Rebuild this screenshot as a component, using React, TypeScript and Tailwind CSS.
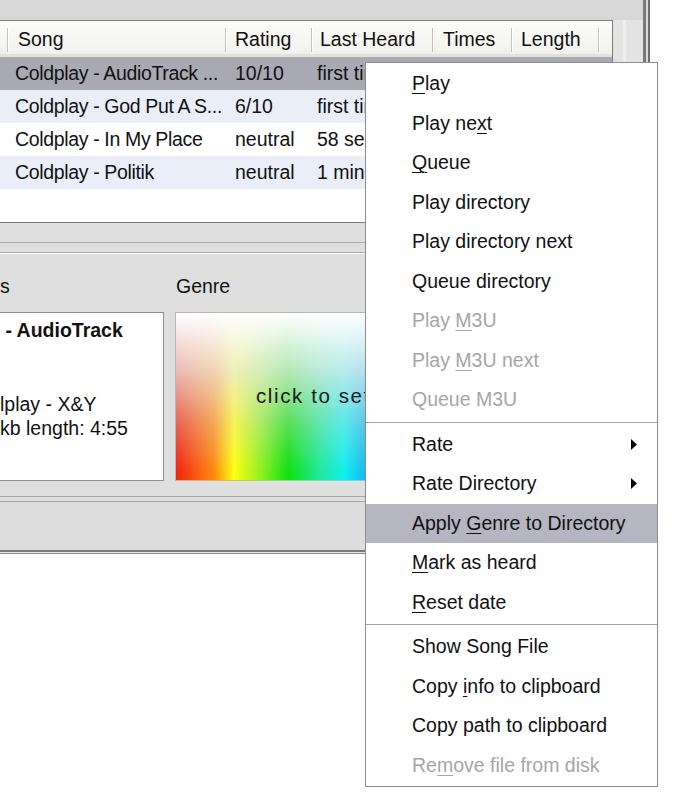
import React from 'react';

type MenuEntry =
  | { label: string; u?: number; disabled?: boolean; sub?: boolean; active?: boolean }
  | 'sep';

const menu: MenuEntry[] = [
  { label: 'Play', u: 0 },
  { label: 'Play next', u: 7 },
  { label: 'Queue', u: 0 },
  { label: 'Play directory' },
  { label: 'Play directory next' },
  { label: 'Queue directory' },
  { label: 'Play M3U', u: 5, disabled: true },
  { label: 'Play M3U next', u: 5, disabled: true },
  { label: 'Queue M3U', disabled: true },
  'sep',
  { label: 'Rate', sub: true },
  { label: 'Rate Directory', sub: true },
  { label: 'Apply Genre to Directory', u: 6, active: true },
  { label: 'Mark as heard', u: 0 },
  { label: 'Reset date', u: 0 },
  'sep',
  { label: 'Show Song File' },
  { label: 'Copy info to clipboard', u: 5 },
  { label: 'Copy path to clipboard' },
  { label: 'Remove file from disk', u: 2, disabled: true },
];

const rows = [
  { song: 'Coldplay - AudioTrack ...', rating: '10/10', heard: 'first time', bg: 'bg-[#a9a9b3]' },
  { song: 'Coldplay - God Put A S...', rating: '6/10', heard: 'first time', bg: 'bg-[#e9eef9]' },
  { song: 'Coldplay - In My Place', rating: 'neutral', heard: '58 sec ago', bg: 'bg-white' },
  { song: 'Coldplay - Politik', rating: 'neutral', heard: '1 min ago', bg: 'bg-[#e9eef9]' },
];

function Label({ text, u }: { text: string; u?: number }) {
  if (u === undefined) return <span>{text}</span>;
  return (
    <span>
      {text.slice(0, u)}
      <span className="underline decoration-1 underline-offset-[3px]">{text[u]}</span>
      {text.slice(u + 1)}
    </span>
  );
}

function HeaderDivider() {
  return <div className="h-[24px] w-[2px] shrink-0 border-l border-[#c4c4bc] bg-white" />;
}

function ContextMenu() {
  return (
    <div className="absolute left-[365px] top-[62px] w-[293px] border border-[#8d8d8d] bg-white py-[1px] text-[19.5px] text-[#111]">
      {menu.map((m, i) => {
        if (m === 'sep') {
          return (
            <div key={i} className="flex h-[5px] items-center">
              <div className="h-px w-full bg-[#a3a3a3]" />
            </div>
          );
        }
        return (
          <div
            key={i}
            className={`flex h-[39.5px] items-center pl-[46px] pr-[20px] ${m.active ? 'bg-[#b5b6c1]' : ''} ${
              m.disabled ? 'text-[#a6a6a6]' : ''
            }`}
          >
            <Label text={m.label} u={m.u} />
            {m.sub && (
              <svg className="ml-auto" width="6" height="11" viewBox="0 0 6 11">
                <path d="M0 0 L6 5.5 L0 11 Z" fill="#000" />
              </svg>
            )}
          </div>
        );
      })}
    </div>
  );
}

export default function App() {
  return (
    <div className="relative h-[808px] w-[680px] overflow-hidden bg-white font-['Liberation_Sans',Arial,sans-serif] text-[19.5px] text-[#111]">
      {/* background window */}
      <div className="flex w-[650px]">
        <div className="flex w-[643px] flex-col bg-[#dfdfdf]">
          {/* top band */}
          <div className="h-[20px] bg-[#d7d7d7]" />

          {/* list + right strip */}
          <div className="flex h-[203px]">
            <div className="flex w-[613px] flex-col border-r border-t border-b border-[#7b7b7b] bg-white">
              <div className="flex h-[36px] items-center border-b-[3px] border-[#e2e2da] bg-gradient-to-b from-[#fcfcfa] to-[#f1f1ec] pt-[5px]">
                <div className="w-[7px] shrink-0" />
                <HeaderDivider />
                <div className="w-[216px] shrink-0 pl-[9px]">Song</div>
                <HeaderDivider />
                <div className="w-[84px] shrink-0 pl-[8px]">Rating</div>
                <HeaderDivider />
                <div className="w-[119px] shrink-0 pl-[7px]">Last Heard</div>
                <HeaderDivider />
                <div className="w-[77px] shrink-0 pl-[9px]">Times</div>
                <HeaderDivider />
                <div className="w-[85px] shrink-0 pl-[8px]">Length</div>
                <HeaderDivider />
              </div>
              {rows.map((r) => (
                <div key={r.song} className={`flex h-[33px] items-center whitespace-nowrap ${r.bg}`}>
                  <div className="w-[9px] shrink-0" />
                  <div className="w-[218px] shrink-0 pl-[6px] tracking-[-0.35px]">{r.song}</div>
                  <div className="w-[86px] shrink-0 pl-[8px]">{r.rating}</div>
                  <div className="w-[121px] shrink-0 pl-[4px]">{r.heard}</div>
                </div>
              ))}
            </div>
            <div className="flex flex-1 bg-[#e3e3e3]">
              <div className="ml-[10px] w-[3px] bg-[#eeeeee]" />
            </div>
          </div>

          {/* splitter */}
          <div className="h-[19px]" />
          <div className="h-[11px] border-t border-b border-[#a9a9a9] bg-[#dedede]" />
          <div className="h-px bg-white" />

          {/* details panel */}
          <div className="flex flex-col pt-[21px]">
            <div className="flex h-[24px] items-center leading-none">
              <div className="w-[176px] shrink-0">s</div>
              <div>Genre</div>
            </div>
            <div className="mt-[13px] flex gap-[11px]">
              <div className="flex h-[169px] w-[164px] shrink-0 flex-col whitespace-nowrap border-t border-r border-b border-[#8f8f8f] bg-white pt-[5px] leading-[24.6px]">
                <div className="font-bold">&nbsp;- AudioTrack</div>
                <div>&nbsp;</div>
                <div>&nbsp;</div>
                <div>lplay - X&amp;Y</div>
                <div>kb length: 4:55</div>
              </div>
              <div className="flex h-[169px] w-[307px] items-center border border-[#b7b7b7] bg-[linear-gradient(to_bottom,rgba(255,255,255,1)_0%,rgba(235,235,235,0.75)_35%,rgba(225,225,225,0.35)_65%,rgba(255,255,255,0)_95%),linear-gradient(to_right,#ee2211_0px,#ff8a10_38px,#ffff10_58px,#90f020_85px,#10e010_112px,#20e8a0_145px,#10f0f0_168px,#2080f0_210px,#2020f0_240px,#e020e0_280px,#ee2211_306px)] pl-[80px] text-[20.5px] tracking-[1.6px] text-[#1a1a1a]">
                click to set genre
              </div>
            </div>
            <div className="h-[15px]" />
            <div className="h-[6px] border-t border-b border-[#a5a5a5]" />
            <div className="h-[48px] bg-[#dddddd]" />
            <div className="h-[2px] bg-[#7a7a7a]" />
            <div className="h-px bg-[#e8e8e8]" />
            <div className="h-px bg-[#8a8a8a]" />
          </div>
        </div>
        <div className="w-[3px] bg-[#7a7a7a]" />
        <div className="w-[2px] bg-[#d9d9d9]" />
        <div className="w-[2px] bg-[#6c6c6c]" />
      </div>

      <ContextMenu />
    </div>
  );
}
